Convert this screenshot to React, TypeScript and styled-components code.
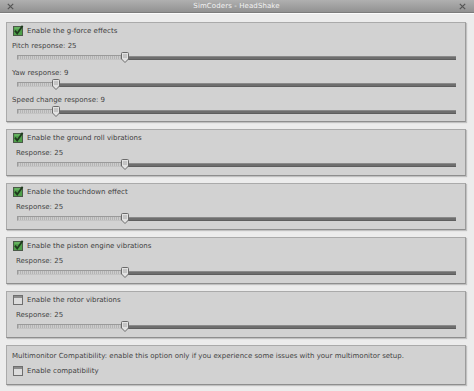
import React from "react";
import styled, { createGlobalStyle } from "styled-components";

const Global = createGlobalStyle`
  html, body { margin: 0; padding: 0; }
  body {
    width: 474px;
    height: 391px;
    overflow: hidden;
    background: #ececec;
    font-family: "DejaVu Sans", "Liberation Sans", sans-serif;
  }
`;

const Window = styled.div`
  width: 474px;
  height: 391px;
  display: flex;
  flex-direction: column;
  background: #ececec;
`;

const TitleBar = styled.div`
  height: 12px;
  flex: 0 0 12px;
  display: flex;
  align-items: center;
  justify-content: space-between;
  padding: 0 8px 0 7px;
  background: linear-gradient(#b0b0b0, #929292);
  border-bottom: 1px solid #7c7c7c;
  box-shadow: 0 1px 0 #fbfbfb;
`;

const Title = styled.span`
  color: #f2f2f2;
  font-size: 7px;
  line-height: 12px;
  letter-spacing: 0.1px;
`;

const Content = styled.div`
  display: flex;
  flex-direction: column;
  gap: 7px;
  padding: 9px 8px 0 6px;
`;

const Panel = styled.div<{ $h: number }>`
  box-sizing: border-box;
  height: ${(p) => p.$h}px;
  display: flex;
  flex-direction: column;
  padding-top: 2px;
  background: #d2d2d2;
  border: 1px solid #aaaaaa;
  border-bottom-color: #8e8e8e;
  border-right-color: #9c9c9c;
  box-shadow: 1px 1px 1px rgba(0, 0, 0, 0.18);
`;

const CheckRow = styled.label<{ $mt?: number }>`
  display: flex;
  align-items: center;
  gap: 3px;
  height: 12px;
  margin-top: ${(p) => p.$mt ?? 0}px;
  margin-left: 6px;
  font-size: 7px;
  color: #3e3e3e;
`;

const Label = styled.div<{ $mt: number; $ml: number }>`
  height: 12px;
  line-height: 12px;
  margin-top: ${(p) => p.$mt}px;
  margin-left: ${(p) => p.$ml}px;
  font-size: 7px;
  color: #444444;
  white-space: nowrap;
`;

const SliderWrap = styled.div`
  position: relative;
  height: 11px;
  margin: 0 9px 0 10px;
  display: flex;
  align-items: center;
`;

const Filled = styled.div`
  box-sizing: border-box;
  height: 5px;
  border: 1px solid #9a9a9a;
  border-right: none;
  border-bottom-color: #c4c4c4;
  background: repeating-linear-gradient(90deg, #b4b4b4 0 1px, #cdcdcd 1px 2px);
`;

const Rest = styled.div`
  flex: 1;
  box-sizing: border-box;
  height: 4px;
  background: #6e6e6e;
  border-top: 1px solid #8a8a8a;
  border-bottom: 1px solid #5e5e5e;
`;

const ThumbSvg = styled.svg`
  position: absolute;
  top: 0;
  width: 9px;
  height: 11px;
  transform: translateX(-4.5px);
`;

const BoxSvg = styled.svg`
  width: 11px;
  height: 11px;
  flex: 0 0 11px;
  margin-top: -1px;
`;

function CheckBox({ checked }: { checked: boolean }) {
  return (
    <BoxSvg viewBox="0 0 11 11">
      {checked ? (
        <>
          <rect x="0.5" y="1.5" width="9" height="9" fill="#4fa04a" stroke="#4a5a48" />
          <rect x="1.5" y="2.5" width="7" height="1" fill="#7cc276" />
          <path d="M2 5.6 L4.2 8.4 L9.6 0.8" fill="none" stroke="#1f3a1e" strokeWidth="1.8" />
        </>
      ) : (
        <>
          <rect x="0.5" y="1.5" width="9" height="9" fill="#dcdcdc" stroke="#6e6e6e" />
          <rect x="1" y="2" width="8" height="2" fill="#8c8c8c" />
        </>
      )}
    </BoxSvg>
  );
}

function Slider({ value }: { value: number }) {
  const pct = value * 0.98;
  return (
    <SliderWrap>
      <Filled style={{ width: `${pct}%` }} />
      <Rest />
      <ThumbSvg viewBox="0 0 9 11" style={{ left: `${pct}%` }}>
        <path d="M1 1.5 Q1 0.5 2 0.5 L7 0.5 Q8 0.5 8 1.5 L8 7 L4.5 10.5 L1 7 Z" fill="#e2e2e2" stroke="#6a6a6a" />
        <path d="M2.5 3 H6.5 M2.5 5 H6.5" stroke="#9a9a9a" strokeWidth="0.8" />
      </ThumbSvg>
    </SliderWrap>
  );
}

function CloseIcon() {
  return (
    <svg width="7" height="7" viewBox="0 0 7 7">
      <path d="M0.8 0.8 L6.2 6.2 M6.2 0.8 L0.8 6.2" stroke="#555" strokeWidth="1.2" />
    </svg>
  );
}

const effects = [
  { title: "Enable the ground roll vibrations", checked: true, value: 25 },
  { title: "Enable the touchdown effect", checked: true, value: 25 },
  { title: "Enable the piston engine vibrations", checked: true, value: 25 },
  { title: "Enable the rotor vibrations", checked: false, value: 25 },
];

export default function App() {
  return (
    <>
      <Global />
      <Window>
        <TitleBar>
          <CloseIcon />
          <Title>SimCoders - HeadShake</Title>
          <CloseIcon />
        </TitleBar>
        <Content>
          <Panel $h={100}>
            <CheckRow>
              <CheckBox checked />
              Enable the g-force effects
            </CheckRow>
            <Label $mt={3} $ml={5}>Pitch response: 25</Label>
            <Slider value={25} />
            <Label $mt={4} $ml={5}>Yaw response: 9</Label>
            <Slider value={9} />
            <Label $mt={4} $ml={5}>Speed change response: 9</Label>
            <Slider value={9} />
          </Panel>
          {effects.map((e) => (
            <Panel key={e.title} $h={47}>
              <CheckRow>
                <CheckBox checked={e.checked} />
                {e.title}
              </CheckRow>
              <Label $mt={3} $ml={9}>Response: {e.value}</Label>
              <Slider value={e.value} />
            </Panel>
          ))}
          <Panel $h={40}>
            <Label $mt={2} $ml={5}>
              Multimonitor Compatibility: enable this option only if you experience some issues with your multimonitor setup.
            </Label>
            <CheckRow $mt={3}>
              <CheckBox checked={false} />
              Enable compatibility
            </CheckRow>
          </Panel>
        </Content>
      </Window>
    </>
  );
}
